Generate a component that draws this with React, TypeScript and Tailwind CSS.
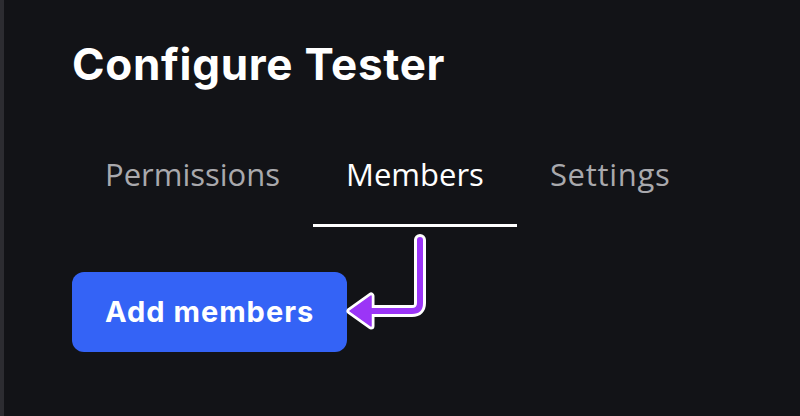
const tabs = ['Permissions', 'Members', 'Settings'];

export default function App() {
  return (
    <div
      className="relative h-[416px] w-[800px] overflow-hidden border-l-4 border-[#2c2c31] bg-[#121317] pl-[68px] text-white"
      style={{ fontFamily: '"Open Sans", sans-serif' }}
    >
      {/* Title */}
      <h1
        className="pt-[36px] text-[44px] leading-[56px] font-bold tracking-[0.7px]"
        style={{ fontFamily: 'Inter, sans-serif' }}
      >
        Configure Tester
      </h1>

      {/* Tabs */}
      <div className="mt-[43px] flex">
        {tabs.map((t) => {
          const active = t === 'Members';
          return (
            <div
              key={t}
              className={
                active
                  ? 'flex h-[92px] items-center border-b-[3px] border-white px-[33px] pb-[10px] text-[31px] text-white'
                  : t === 'Settings'
                    ? 'flex h-[92px] items-center border-b-[3px] border-transparent px-[33px] pb-[10px] text-[31px] tracking-[0.7px] text-[#a9a9ad]'
                    : 'flex h-[92px] items-center border-b-[3px] border-transparent px-[33px] pb-[10px] text-[31px] text-[#a9a9ad]'
              }
            >
              {t}
            </div>
          );
        })}
      </div>

      {/* Action */}
      <button
        className="mt-[45px] flex h-[80px] items-center rounded-[12px] bg-[#3463f6] px-[33px] text-[29px] font-bold tracking-[1px] text-white"
        style={{ fontFamily: 'Inter, sans-serif' }}
      >
        Add members
      </button>

      {/* Annotation arrow */}
      <svg
        className="absolute left-[336px] top-[230px]"
        width="90"
        height="110"
        viewBox="0 0 90 110"
        fill="none"
      >
        <path
          d="M80 10 V73 Q80 81 72 81 H30"
          stroke="#ffffff"
          strokeWidth="12"
          strokeLinecap="round"
          strokeLinejoin="round"
        />
        <polygon points="10,81 31,66 31,96" fill="#ffffff" stroke="#ffffff" strokeWidth="7" strokeLinejoin="round" />
        <path
          d="M80 10 V73 Q80 81 72 81 H30"
          stroke="#9b35f7"
          strokeWidth="6"
          strokeLinecap="round"
          strokeLinejoin="round"
        />
        <polygon points="10,81 31,66 31,96" fill="#9b35f7" stroke="#9b35f7" strokeWidth="1.5" strokeLinejoin="round" />
      </svg>
    </div>
  );
}
